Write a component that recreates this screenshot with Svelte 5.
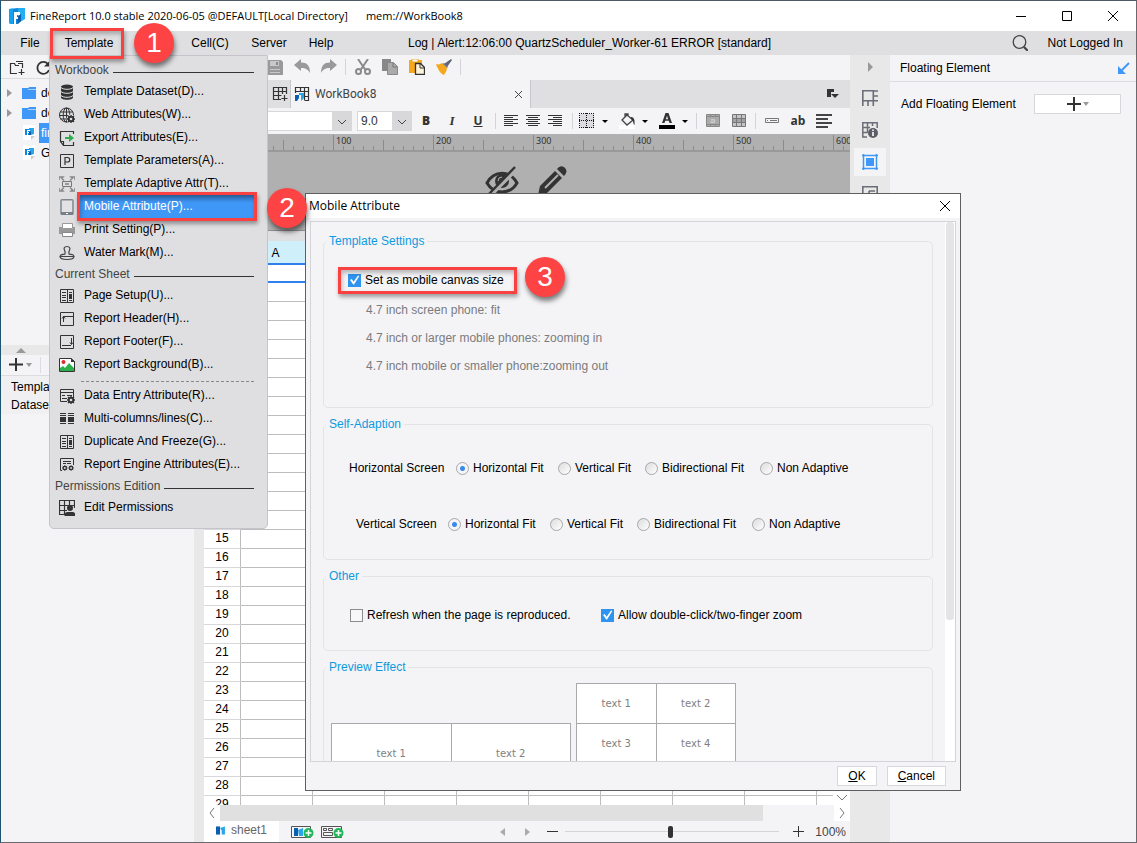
<script lang="ts">
  interface MenuEntry {
    icon: string
    label: string
    active?: boolean
  }

  interface MenuGroup {
    title: string
    items: MenuEntry[]
  }

  const menuGroups: MenuGroup[] = [
    {
      title: 'Workbook',
      items: [
        { icon: 'database', label: 'Template Dataset(D)...' },
        { icon: 'globe', label: 'Web Attributes(W)...' },
        { icon: 'export', label: 'Export Attributes(E)...' },
        { icon: 'param', label: 'Template Parameters(A)...' },
        { icon: 'adaptive', label: 'Template Adaptive Attr(T)...' },
        { icon: 'mobile', label: 'Mobile Attribute(P)...', active: true },
        { icon: 'print', label: 'Print Setting(P)...' },
        { icon: 'stamp', label: 'Water Mark(M)...' },
      ],
    },
    {
      title: 'Current Sheet',
      items: [
        { icon: 'page', label: 'Page Setup(U)...' },
        { icon: 'header', label: 'Report Header(H)...' },
        { icon: 'footer', label: 'Report Footer(F)...' },
        { icon: 'background', label: 'Report Background(B)...' },
      ],
    },
    {
      title: '',
      items: [
        { icon: 'entry', label: 'Data Entry Attribute(R)...' },
        { icon: 'columns', label: 'Multi-columns/lines(C)...' },
        { icon: 'page', label: 'Duplicate And Freeze(G)...' },
        { icon: 'engine', label: 'Report Engine Attributes(E)...' },
      ],
    },
    {
      title: 'Permissions Edition',
      items: [{ icon: 'permission', label: 'Edit Permissions' }],
    },
  ]

  const gear = (x: number, y: number) =>
    `<circle cx="${x}" cy="${y}" r="2.4" fill="none" stroke="#333" stroke-width="1.6"/><path d="M${x} ${y - 4}v8M${x - 4} ${y}h8M${x - 3} ${y - 3}l6 6M${x + 3} ${y - 3}l-6 6" stroke="#333" stroke-width="1.3"/><circle cx="${x}" cy="${y}" r="1.3" fill="#dfdfe1"/>`

  // 16x16 drawings
  const icons: Record<string, string> = {
    logo: '<path d="M0 1l9-1v16H2l-2-1z" fill="#0f86dc"/><path d="M0 1l4-.5V16H2l-2-1z" fill="#14a3ee"/><path d="M9 0h7v11l-5 3-2-8z" fill="#22aef0"/><path d="M8 9l4-3v7l-3 3z" fill="#0b5fb0"/><path d="M5 4h6v3H8v2h1v2H7v5H5z" fill="#fff"/>',
    database: '<path d="M2 2.500v11c0 3 12 3 12 0v-11z" fill="#333"/><ellipse cx="8" cy="2.800" rx="6" ry="2.300" fill="#333"/><path d="M2 3.500c2 2.400 10 2.400 12 0M2 7.500c2 2.400 10 2.400 12 0M2 11.500c2 2.400 10 2.400 12 0" fill="none" stroke="#dfdfe1"/>',
    globe: '<g fill="none" stroke="#333"><circle cx="7.500" cy="8" r="7"/><ellipse cx="7.500" cy="8" rx="3.300" ry="7"/><path d="M1 5h13M.5 8.500h14M1.500 12h8M7.500 1v14"/></g><circle cx="12" cy="12" r="4.500" fill="#dfdfe1"/>' + gear(12, 12),
    export: '<path d="M14.500 4V1.500h-13v10l3 4h10V12M1.500 11.500h3v4" fill="none" stroke="#333" stroke-width="1.200"/><path d="M6 7h4V4l5 4-5 4V9H6z" fill="#2fae4e"/>',
    param: '<path d="M1.500 1.500h13v13h-13z" fill="none" stroke="#333"/><path d="M6 12V4.500h2.500a2.200 2.200 0 0 1 0 4.500H6" fill="none" stroke="#333" stroke-width="1.200"/>',
    adaptive: '<path d="M3.500 5.500h9v5h-9z" fill="none" stroke="#777"/><path d="M6 7h4v2H6z" fill="#999"/><path d="M0 1h4l-1.300 1.300L5 4.500M16 1h-4l1.300 1.300L11 4.500M0 15h4l-1.300-1.300L5 11.500M16 15h-4l1.300-1.300L11 11.500M0 1v3M16 1v3M0 15v-3M16 15v-3" fill="none" stroke="#888" stroke-width="1.500"/>',
    mobile: '<rect x="2" y=".8" width="12" height="14.500" rx="1" fill="#e2e2e4" stroke="#808890" stroke-width="1.500"/><path d="M2 13h12v3H2z" fill="#778088"/><path d="M7 14h2v1H7z" fill="#fff"/>',
    print: '<path d="M3.500 1.500h10v5h-10z" fill="#fff" stroke="#999"/><path d="M0 5h3v2h11V5h2v7H0z" fill="#999"/><path d="M3.500 10.500h10v4h-10z" fill="#fff" stroke="#888"/>',
    stamp: '<path d="M6.200 7C4 3 5.500 1.500 8 1.500S12 3 9.800 7l.4 2.200c3 .2 4.800 1 4.800 2.300H1c0-1.300 1.800-2 4.800-2.300zM1 11.500c0 4 14 4 14 0" fill="none" stroke="#444" stroke-width="1.200"/>',
    page: '<path d="M1.500 1.500h13v13h-13zM8.500 1v14M3 4.500h4M3 7.500h4M3 9.500h4M3 12.500h4M10 4.500h3M10 12.500h3" fill="none" stroke="#333"/><path d="M10 6h3v5h-3z" fill="#333"/>',
    header: '<path d="M1.500 1.500h13v13h-13zM4 5.500h10M4.500 11V6M3 7.500l1.500-2L6 7.500" fill="none" stroke="#333"/>',
    footer: '<path d="M1.500 1.500h13v13h-13zM3 11.500h9M12.500 4v6M11 8.500l1.500 2 1.500-2" fill="none" stroke="#333"/>',
    background: '<path d="M.5 1.500h11.500l3.500 3v10H.5z" fill="#fff" stroke="#333"/><path d="M12 1v4h4z" fill="#333"/><circle cx="4.500" cy="5" r="2" fill="#e02a2a"/><path d="M1 14v-3l3-2 2 2 4-5 5 5v3z" fill="#2fae4e"/>',
    entry: '<path d="M8 13.500H1.500v-12h13V9M1.500 4.500h13M3 7.500h3M8 7.500h5M3 10.500h5" fill="none" stroke="#333"/>' + gear(12, 12),
    columns: '<path d="M1 2.500h6M9 2.500h6M1 4.500h6M9 4.500h6M1 12.500h6M9 12.500h6" stroke="#333"/><path d="M1 6h6v5H1zM9 6h6v5H9z" fill="#333"/>',
    engine: '<path d="M3 13.500H1.500v-12h13V8M4 4.500h8M4 6.500h3M8 6.500h4" fill="none" stroke="#333"/><g transform="translate(3 4) scale(.7)">' + gear(4, 10) + gear(13, 10) + '</g>',
    permission: '<path d="M6 14.500H.5v-14h15V8M.5 5.500h15M.5 10.500H8M5.500.5v14M10.500.5V6" fill="none" stroke="#333" stroke-width="1.200"/><circle cx="11" cy="8" r="3" fill="#333"/><path d="M5.500 16c0-5 3-4 5.500-4s5.500-1 5.500 4z" fill="#333"/>',
    save: '<path d="M0 1h14l2 2v13H0z" fill="#999"/><path d="M3 2h9v5H3zM3 10h10v1H3zM3 13h10v1H3z" fill="#c8c8ca"/><path d="M9 3h2v3H9z" fill="#888"/>',
    undo: '<path d="M0 6l7-6v3.500c6 0 9 3 9 10.500-2-3.500-4-5-9-5V12z" fill="#999"/>',
    redo: '<path d="M16 6L9 0v3.500C3 3.500 0 6.500 0 14c2-3.500 4-5 9-5V12z" fill="#999"/>',
    cut: '<g fill="none" stroke="#8a8a8a" stroke-width="2"><circle cx="3.500" cy="12.500" r="2.500"/><circle cx="12.500" cy="12.500" r="2.500"/><path d="M3 0l7.500 11M13 0L5.500 11"/></g>',
    copy: '<path d="M0 0h9v12H0z" fill="#888"/><path d="M5.500 3.500h6l4 4v8h-10z" fill="#aaa" stroke="#888"/><path d="M11 4v4h4" fill="none" stroke="#777"/>',
    paste: '<path d="M0 1h13v13H0z" fill="#f5a81c"/><path d="M3 0h6v3H3z" fill="#fff" stroke="#e59a10" stroke-width=".8"/><path d="M6.500 4.500h5l4 4v7h-9z" fill="#fff3da" stroke="#333" stroke-width="1.300"/><path d="M11 5v4h4" fill="none" stroke="#333"/>',
    brush: '<path d="M15 0l1 1-5 7-3-3z" fill="#5e6673"/><path d="M8 4l4 4-1 1-5-4z" fill="#778"/><path d="M0 5c3 1 4 0 6-1l5 5c0 3-2 5-3 7-3-1-6-5-8-11z" fill="#f5a81c"/>',
    newtab: '<path d="M14.500 8V1.500h-13v12H9M1.500 5.500h13M1.500 9.500h8M6.500 1.500v12M10.500 1.500V8M12.500 9v6M9.500 12.500h6" fill="none" stroke="#333" stroke-width="1.200"/>',
    book: '<path d="M1.500 7V1.500h13v13H11M1.500 5.500h13M6.500 1.500v4M10.500 1.500v13M10 10.500h4" fill="none" stroke="#333" stroke-width="1.200"/><path d="M1 9h4v3L3 15H1z" fill="#0b5fb0"/><path d="M5 7h5v5l-3 3V9H5z" fill="#29a5e8"/>',
    tabs: '<path d="M3 3h7v3H7v5H3z" fill="#333"/><path d="M7 8h8l-4 4z" fill="#333"/>',
    alignleft: '<path d="M1 2.500h14M1 4.500h9M1 6.500h14M1 8.500h9M1 10.500h14M1 12.500h9" stroke="#333"/>',
    aligncenter: '<path d="M1 2.500h14M3 4.500h10M1 6.500h14M3 8.500h10M1 10.500h14M3 12.500h10" stroke="#333"/>',
    alignright: '<path d="M1 2.500h14M6 4.500h9M1 6.500h14M6 8.500h9M1 10.500h14M6 12.500h9" stroke="#333"/>',
    borders: '<path d="M1 1h14v14H1z" fill="#dcdce0"/><path d="M0 .5h15M0 14.500h15M0 7.500h15M.5 0v15M7.500 0v15M14.500 0v15" fill="none" stroke="#111" stroke-dasharray="1 1"/>',
    fill: '<path d="M0 12h16v4H0z" fill="#fff"/><path d="M8 2l6 5-6 5-5-5zM6 5V1h3v3" fill="none" stroke="#444" stroke-width="1.300"/><path d="M12 4c3 0 4 3 3.500 8C14 11 15 8 12 6z" fill="#333"/>',
    fontcolor: '<path d="M0 12h16v4H0z" fill="#000"/><path d="M6.500 0h3L13 10h-2.500l-.8-2.200H6.300L5.500 10H3zM8 2.800L6.900 6.200h2.200z" fill="#333" fill-rule="evenodd"/>',
    merge: '<path d="M1.500 1.500h13v12h-13z" fill="#aaa" stroke="#888"/><path d="M1 3.500h14M1 11.500h14M5.500 1v2M10.500 1v2M5.500 12v2M10.500 12v2" stroke="#888"/><path d="M6 6.500h3.500v3H6V8h3" fill="none" stroke="#ccc"/>',
    unmerge: '<path d="M1.500 1.500h13v12h-13z" fill="#c4c4c6" stroke="#777"/><path d="M2 5h12v5H2z" fill="#a2a2a4"/><path d="M1 5.500h14M1 9.500h14M5.500 1v13M10.500 1v13" stroke="#777"/>',
    widget: '<path d="M1.500 5.500h13v4h-13z" fill="none" stroke="#777"/><path d="M3 7.500h1M6 7.500h7" stroke="#777"/>',
    lines: '<path d="M0 2h16M0 6h12M0 10h16M0 14h12" stroke="#444" stroke-width="2"/>',
    search: '<circle cx="7.500" cy="7" r="6.300" fill="none" stroke="#444" stroke-width="1.300"/><path d="M12 12l4 4" stroke="#444" stroke-width="2.200"/>',
    cellattr: '<path d="M.8.8h10.500v10H.8zM.8 10.800V16M6 11v5M11.300 11v5M11 1h5M11 6h5M11 10.800h5" fill="none" stroke="#6b6d78" stroke-width="1.600"/>',
    cellinfo: '<path d="M5 15H.8V.8h14.400V6M.8 5.500H8M.8 10.500h5M5.500.8v10M10.500.8V4" fill="none" stroke="#6b6d78" stroke-width="1.500"/><circle cx="11" cy="11" r="5" fill="#5b5d68"/><path d="M11 10v4M11 7.500v1.500" stroke="#fff" stroke-width="1.600"/>',
    floating: '<path d="M1.500 0v16M14.500 0v16M0 1.500h16M0 14.500h16" stroke="#3f97f7" stroke-width="1.500"/><path d="M4 4h8v8H4z" fill="#3f97f7"/>',
    widgetset: '<path d="M.8.8h14.400v14H.8zM7 5h6M7 5v6" fill="none" stroke="#6b6d78" stroke-width="1.600"/>',
    newfolder: '<path d="M8 13.500H1.500v-10h4l1 2H10M9 3.500h4.500V8M12.500 9v6M9.500 12.500h6M7 1.500h7" fill="none" stroke="#333" stroke-width="1.200"/>',
    refresh: '<path d="M13 4a6 6 0 1 0 1 6" fill="none" stroke="#333" stroke-width="1.800"/><path d="M14.500 1v5.500H9z" fill="#333"/>',
    folder: '<path d="M1 3h6l1.500-1H15v12H1z" fill="#3f97f7"/><path d="M7 4.500h8" stroke="#a8d0fb"/>',
    file: '<path d="M2 0h12v11l-4 4H2z" fill="#fff"/><path d="M14 11h-4v4z" fill="#ccc"/><path d="M4 4h4v6H4z" fill="#0f86dc"/><path d="M8 3h5v6l-3 1H8z" fill="#29a5e8"/><path d="M6 5h3v1H7v1h1v1H7v2H6z" fill="#fff"/><path d="M8 7l2-1v4H8z" fill="#0b5fb0"/>',
    sheet: '<path d="M0 3h5v10H0z" fill="#0b5fb0"/><path d="M5 5l6-2v10H7V8z" fill="#29a5e8"/>',
    arrow: '<path d="M13 3L5 11" stroke="#3f97f7" stroke-width="2"/><path d="M2 6v8h8z" fill="#3f97f7"/>',
  }

  const addSheet = [
    '<path d="M.5 2.500h19v11H.5z" fill="none" stroke="#555"/><path d="M3 4h4v8H3z" fill="#0b5fb0"/><path d="M7 6l5-2v8H8z" fill="#29a5e8"/>',
    '<path d="M.5 2.500h20v11H.5zM2.500 4.500h3v2h-3zM7.500 4.500h4v2h-4zM2.500 8.500h9v3h-9z" fill="none" stroke="#555"/>',
  ]

  const strip = ['cellattr', 'cellinfo', 'floating', 'widgetset']
  const tree = [
    { icon: 'folder', label: 'de', open: true },
    { icon: 'folder', label: 'de', open: true },
    { icon: 'file', label: 'fin', selected: true },
    { icon: 'file', label: 'G' },
  ]
  const rows = Array.from({ length: 29 }, (_, i) => i + 1)
  const columns = ['A', 'B', 'C', 'D', 'E', 'F', 'G', 'H', 'I']
  const ticks = Array.from({ length: 62 }, (_, i) => i)

  const fits = [
    { label: 'Horizontal Fit', size: 'w-horizontal' },
    { label: 'Vertical Fit', size: 'w-vertical' },
    { label: 'Bidirectional Fit', size: 'w-both' },
    { label: 'Non Adaptive', size: '' },
  ]

  let horizontal = $state('Horizontal Fit')
  let vertical = $state('Horizontal Fit')
  let mobileCanvas = $state(true)
  let refreshPage = $state(false)
  let allowZoom = $state(true)
  let zoom = $state(49)
</script>

{#snippet icon(name: string, size = 16)}
  <svg width={size} height={size} viewBox="0 0 16 16" aria-hidden="true">{@html icons[name]}</svg>
{/snippet}

{#snippet tool(name: string, label: string)}
  <button class="tool" aria-label={label}>{@render icon(name)}</button>
{/snippet}

<div class="window">
  <header class="titlebar">
    {@render icon('logo')}
    <span class="app-title">FineReport 10.0 stable 2020-06-05 @DEFAULT[Local Directory]</span>
    <span class="file-title">mem://WorkBook8</span>
    <div class="win-buttons">
      <button aria-label="Minimize"><svg width="12" height="12"><path d="M1 6.500h10" stroke="#000" /></svg></button>
      <button aria-label="Maximize"><svg width="12" height="12"><path d="M1.500 1.500h9v9h-9z" fill="none" stroke="#000" /></svg></button>
      <button aria-label="Close"><svg width="12" height="12"><path d="M1 1l10 10M11 1L1 11" stroke="#000" /></svg></button>
    </div>
  </header>

  <nav class="menubar">
    <button class="menu-file">File</button>
    <button class="menu-template">Template</button>
    <button class="menu-cell">Cell(C)</button>
    <button class="menu-server">Server</button>
    <button class="menu-help">Help</button>
    <span class="log">Log | Alert:12:06:00 QuartzScheduler_Worker-61 ERROR [standard]</span>
    <button class="search" aria-label="Search">{@render icon('search')}</button>
    <button class="login">Not Logged In</button>
  </nav>

  <div class="body">
    <aside class="left">
      <div class="left-tools">
        <button aria-label="New folder">{@render icon('newfolder')}</button>
        <button aria-label="Refresh">{@render icon('refresh')}</button>
      </div>
      <ul class="tree">
        {#each tree as node}
          <li>
            <span class="expander">{#if node.open}<svg width="5" height="8"><path d="M0 0l5 4-5 4z" fill="#999" /></svg>{/if}</span>
            {@render icon(node.icon)}
            <span class="node-label" class:selected={node.selected}>{node.label}</span>
          </li>
        {/each}
      </ul>
      <div class="divider"><svg width="10" height="5"><path d="M0 5l5-5 5 5z" fill="#999" /></svg></div>
      <div class="dataset-tools">
        <button aria-label="Add dataset">
          <svg width="24" height="14"><path d="M7 0v13M0 6.500h14" stroke="#333" stroke-width="2" /><path d="M17 5h6l-3 4z" fill="#999" /></svg>
        </button>
      </div>
      <div class="dataset-tabs">
        <span>Template</span>
        <span>Dataset</span>
      </div>
    </aside>
    <div class="splitter"></div>

    <main class="center">
      <div class="toolbar">
        {@render tool('save', 'Save')}
        {@render tool('undo', 'Undo')}
        {@render tool('redo', 'Redo')}
        <i class="sep"></i>
        {@render tool('cut', 'Cut')}
        {@render tool('copy', 'Copy')}
        {@render tool('paste', 'Paste')}
        {@render tool('brush', 'Format painter')}
        <i class="sep"></i>
      </div>

      <div class="tabs">
        <button class="new-tab" aria-label="New tab">{@render icon('newtab')}</button>
        <div class="tab">
          {@render icon('book')}
          <span>WorkBook8</span>
          <button aria-label="Close tab"><svg width="9" height="9"><path d="M1 1l7 7M8 1L1 8" stroke="#444" /></svg></button>
        </div>
        <button class="tab-list" aria-label="Tab list">{@render icon('tabs')}</button>
      </div>

      <div class="format">
        <span class="pick pick-font">
          <select aria-label="Font"><option></option></select>
          <svg width="10" height="6"><path d="M1 1l4 4 4-4" fill="none" stroke="#444" /></svg>
        </span>
        <span class="pick pick-size">
          <select aria-label="Font size"><option>9.0</option></select>
          <svg width="10" height="6"><path d="M1 1l4 4 4-4" fill="none" stroke="#444" /></svg>
        </span>
        <button class="letter"><b>B</b></button>
        <button class="letter"><em>I</em></button>
        <button class="letter"><u>U</u></button>
        <i class="sep"></i>
        {#each ['alignleft', 'aligncenter', 'alignright'] as name}
          <button class="align" aria-label={name}>{@render icon(name)}</button>
        {/each}
        <i class="sep wide"></i>
        {#each ['borders', 'fill', 'fontcolor'] as name}
          <button class="drop" aria-label={name}>
            {@render icon(name)}
            <svg width="6" height="3"><path d="M0 0h6l-3 3z" fill="#000" /></svg>
          </button>
        {/each}
        <i class="sep"></i>
        {@render tool('merge', 'Merge')}
        {@render tool('unmerge', 'Unmerge')}
        <i class="sep"></i>
        {@render tool('widget', 'Widget')}
        <button class="letter ab">ab</button>
        {@render tool('lines', 'Lines')}
      </div>

      <svg class="ruler" aria-hidden="true">
        {#each ticks as i}
          {@const x = 29 + i * 10}
          <line x1={x + 0.5} x2={x + 0.5} y1={i % 10 === 0 ? 1 : i % 5 === 0 ? 6 : 12} y2="16" />
          {#if i % 10 === 0}
            <text x={x + 3} y="10">{i * 10}</text>
          {/if}
        {/each}
      </svg>

      <div class="param-pane">
        <svg width="34" height="30" viewBox="0 0 34 30">
          <path d="M2 17C9 4 25 4 32 17 25 29 9 29 2 17z" fill="none" stroke="#333" stroke-width="3" />
          <circle cx="17" cy="15" r="7" fill="#333" />
          <path d="M13 15a4 4 0 0 1 4-4" fill="none" stroke="#b0b0b0" stroke-width="1" />
          <path d="M31 3L6 28" stroke="#b0b0b0" stroke-width="5" />
          <path d="M30 1L4 28" stroke="#333" stroke-width="2.500" />
        </svg>
        <svg width="30" height="30" viewBox="0 0 30 30">
          <path d="M1 29l2-9L18 5l7 7L10 27z" fill="#333" />
          <path d="M20 3c3-4 6-3 8-1s2 5-1 8z" fill="#333" />
          <path d="M8 22L21 9" stroke="#b0b0b0" stroke-width="2" />
        </svg>
      </div>
      <div class="pane-edge"></div>

      <div class="sheet">
        <div class="grid-wrap">
          <table class="grid">
            <thead>
              <tr>
                <th class="corner"></th>
                {#each columns as col}<th class:selected={col === 'A'}>{col}</th>{/each}
              </tr>
            </thead>
            <tbody>
              {#each rows as row}
                <tr class:current={row === 1}>
                  <th>{row}</th>
                  {#each columns as col}<td class:active={row === 1 && col === 'A'}></td>{/each}
                </tr>
              {/each}
            </tbody>
          </table>
        </div>
        <div class="vscroll">
          <button aria-label="Scroll down"><svg width="10" height="6"><path d="M0 0l5 5 5-5" fill="none" stroke="#777" /></svg></button>
        </div>
      </div>

      <div class="hscroll">
        <button aria-label="Scroll left"><svg width="6" height="10"><path d="M5 0L1 5l4 5" fill="none" stroke="#777" /></svg></button>
        <div class="hthumb"></div>
        <button aria-label="Scroll right"><svg width="6" height="10"><path d="M1 0l4 5-4 5" fill="none" stroke="#777" /></svg></button>
      </div>

      <footer class="statusbar">
        <button class="sheet-tab">{@render icon('sheet', 13)}sheet1</button>
        {#each addSheet as art, i}
          <button class="add-sheet" aria-label="Add sheet {i + 1}">
            <svg width="23" height="16">{@html art}<circle cx="17.500" cy="9" r="5" fill="#1fb757" /><path d="M17.500 6v6M14.500 9h6" stroke="#fff" stroke-width="1.500" /></svg>
          </button>
        {/each}
        <button class="prev" aria-label="Previous sheet"><svg width="5" height="8"><path d="M5 0L0 4l5 4z" fill="#aaa" /></svg></button>
        <button class="next" aria-label="Next sheet"><svg width="5" height="8"><path d="M0 0l5 4-5 4z" fill="#aaa" /></svg></button>
        <button class="minus" aria-label="Zoom out"><svg width="11" height="11"><path d="M0 5.500h11" stroke="#333" /></svg></button>
        <input type="range" min="0" max="100" aria-label="Zoom" bind:value={zoom} />
        <button class="plus" aria-label="Zoom in"><svg width="11" height="11"><path d="M0 5.500h11M5.500 0v11" stroke="#333" /></svg></button>
        <span class="percent">100%</span>
      </footer>
    </main>

    <div class="strip">
      <button class="collapse" aria-label="Collapse"><svg width="5" height="10"><path d="M0 0l5 5-5 5z" fill="#999" /></svg></button>
      {#each strip as name}
        <button class="strip-btn" class:on={name === 'floating'} aria-label={name}>{@render icon(name)}</button>
      {/each}
    </div>

    <aside class="right">
      <div class="right-head">
        <span>Floating Element</span>
        <button aria-label="Undock">{@render icon('arrow')}</button>
      </div>
      <div class="right-row">
        <span id="add-floating">Add Floating Element</span>
        <button aria-labelledby="add-floating">
          <svg width="22" height="14"><path d="M7 0v14M0 7h14" stroke="#333" stroke-width="2" /><path d="M16 5h6l-3 4z" fill="#999" /></svg>
        </button>
      </div>
    </aside>
  </div>

  <div class="dropdown" role="menu">
    {#each menuGroups as group}
      {#if group.title}
        <div class="group-title"><span>{group.title}</span></div>
      {:else}
        <div class="group-line"></div>
      {/if}
      {#each group.items as item}
        <button class="item" class:active={item.active} role="menuitem">
          {@render icon(item.icon)}
          <span>{item.label}</span>
        </button>
      {/each}
    {/each}
  </div>

  <div class="dialog" role="dialog" aria-labelledby="dialog-title">
    <div class="dialog-title">
      <span id="dialog-title">Mobile Attribute</span>
      <button aria-label="Close dialog"><svg width="12" height="12"><path d="M1 1l10 10M11 1L1 11" stroke="#000" /></svg></button>
    </div>

    <div class="pane">
      <div class="pane-content">
        <fieldset class="settings">
          <legend>Template Settings</legend>
          <label class="check"><input type="checkbox" bind:checked={mobileCanvas} />Set as mobile canvas size</label>
          <div class="hints">
            <p>4.7 inch screen phone: fit</p>
            <p>4.7 inch or larger mobile phones: zooming in</p>
            <p>4.7 inch mobile or smaller phone:zooming out</p>
          </div>
        </fieldset>

        <fieldset class="adaption">
          <legend>Self-Adaption</legend>
          <div class="radio-row horizontal" role="radiogroup" aria-label="Horizontal Screen">
            <span class="row-label">Horizontal Screen</span>
            {#each fits as fit}
              <label class={fit.size}><input type="radio" name="horizontal" value={fit.label} bind:group={horizontal} />{fit.label}</label>
            {/each}
          </div>
          <div class="radio-row vertical" role="radiogroup" aria-label="Vertical Screen">
            <span class="row-label">Vertical Screen</span>
            {#each fits as fit}
              <label class={fit.size}><input type="radio" name="vertical" value={fit.label} bind:group={vertical} />{fit.label}</label>
            {/each}
          </div>
        </fieldset>

        <fieldset>
          <legend>Other</legend>
          <div class="other">
            <label class="check"><input type="checkbox" bind:checked={refreshPage} />Refresh when the page is reproduced.</label>
            <label class="check"><input type="checkbox" bind:checked={allowZoom} />Allow double-click/two-finger zoom</label>
          </div>
        </fieldset>

        <fieldset>
          <legend>Preview Effect</legend>
          <div class="preview">
            <div class="cells before"><span>text 1</span><span>text 2</span></div>
            <div class="cells after"><span>text 1</span><span>text 2</span><span>text 3</span><span>text 4</span></div>
          </div>
        </fieldset>
      </div>
      <div class="pane-scroll"><div></div></div>
    </div>

    <div class="dialog-footer">
      <button><u>O</u>K</button>
      <button><u>C</u>ancel</button>
    </div>
  </div>

  <div class="frame frame-1"></div>
  <div class="frame frame-2"></div>
  <div class="frame frame-3"></div>
  <div class="step step-1">1</div>
  <div class="step step-2">2</div>
  <div class="step step-3">3</div>
</div>

<style>
  :global(body) {
    margin: 0;
  }

  .window {
    position: relative;
    display: flex;
    flex-direction: column;
    box-sizing: border-box;
    height: 100vh;
    overflow: hidden;
    border: 1px solid #6a6a6e;
    border-top-color: #4d5a66;
    border-left-color: #1d5472;
    background: #f4f4f6;
    color: #000;
    font: 12px/16px "Liberation Sans", Arial, sans-serif;
  }
  .window * {
    box-sizing: border-box;
  }

  button {
    display: flex;
    align-items: center;
    justify-content: center;
    padding: 0;
    border: 0;
    background: none;
    color: inherit;
    font: inherit;
    white-space: nowrap;
  }

  svg {
    display: block;
    flex-shrink: 0;
  }

  .titlebar {
    display: flex;
    align-items: center;
    height: 30px;
    padding-left: 8px;
    background: #fff;
    font-family: "Open Sans", "Noto Sans", sans-serif;
    font-size: 11px;
    flex-shrink: 0;
  }
  .app-title {
    margin-left: 5px;
  }
  .file-title {
    margin-left: 18px;
  }
  .win-buttons {
    display: flex;
    margin-left: auto;
  }
  .win-buttons button {
    width: 46px;
    height: 30px;
  }

  .menubar {
    display: flex;
    align-items: center;
    height: 24px;
    padding-right: 13px;
    background: #dfdfe1;
    flex-shrink: 0;
  }
  .menu-file {
    width: 58px;
  }
  .menu-template {
    width: 60px;
  }
  .menu-cell {
    width: 64px;
    margin-left: 59px;
  }
  .menu-server {
    width: 54px;
  }
  .menu-help {
    width: 50px;
  }
  .log {
    margin-left: 62px;
  }
  .search {
    margin-left: auto;
  }
  .login {
    margin-left: 20px;
  }

  .body {
    display: flex;
    flex: 1;
    min-height: 0;
  }

  .left {
    display: flex;
    flex-direction: column;
    width: 193px;
    flex-shrink: 0;
  }
  .left-tools {
    display: flex;
    align-items: center;
    gap: 10px;
    height: 24px;
    padding: 2px 8px 0;
    border-bottom: 1px solid #dcdce0;
  }
  .tree {
    height: 266px;
    margin: 0;
    padding: 4px 0 0;
    list-style: none;
  }
  .tree li {
    display: flex;
    align-items: center;
    height: 20px;
  }
  .expander {
    width: 14px;
    margin-left: 6px;
  }
  .node-label {
    margin-left: 2px;
    padding: 2px;
  }
  .node-label.selected {
    background: #3f97f7;
    color: #fff;
  }
  .divider {
    display: flex;
    align-items: center;
    height: 10px;
    padding-left: 15px;
    background: #e8e8e8;
  }
  .dataset-tools {
    display: flex;
    align-items: center;
    height: 21px;
    padding-left: 8px;
    border-bottom: 1px solid #dcdce0;
  }
  .dataset-tools button {
    height: 16px;
    padding-right: 7px;
    border-right: 1px solid #dcdce0;
  }
  .dataset-tabs {
    display: flex;
    flex-direction: column;
    padding: 2px 0 0 10px;
    background: #f0f0f2;
    line-height: 18px;
  }

  .splitter {
    width: 10px;
    background: #e8e8e8;
    flex-shrink: 0;
  }

  .center {
    display: flex;
    flex-direction: column;
    flex: 1;
    min-width: 0;
  }

  .toolbar {
    display: flex;
    align-items: center;
    height: 25px;
    padding: 0 0 2px 57px;
  }
  .tool {
    width: 27px;
    height: 22px;
  }
  .sep {
    width: 1px;
    height: 16px;
    margin: 0 3px;
    background: #d4d4d8;
  }
  .letter + .sep {
    margin: 0 4px;
  }
  .sep.wide {
    margin-left: 6px;
  }

  .tabs {
    display: flex;
    height: 28px;
    background: #dfdfe1;
  }
  .new-tab {
    width: 87px;
    padding-left: 65px;
    border-right: 1px solid #c8c8cc;
  }
  .tab {
    display: flex;
    align-items: center;
    width: 240px;
    padding: 0 7px 0 3px;
    border-right: 1px solid #c8c8cc;
    background: #f4f4f6;
    color: #444;
    font-family: Roboto, sans-serif;
  }
  .tab span {
    margin: 0 auto 0 5px;
  }
  .tab-list {
    width: 20px;
    margin-left: auto;
    margin-right: 8px;
  }

  .format {
    display: flex;
    align-items: center;
    height: 26px;
  }
  .format .tool {
    width: 26px;
  }
  .pick {
    position: relative;
    height: 20px;
    margin-right: 5px;
  }
  .pick-font {
    width: 148px;
  }
  .pick-size {
    width: 55px;
    margin-right: 1px;
  }
  .pick select {
    width: 100%;
    height: 100%;
    padding: 0 0 0 3px;
    border: 1px solid #d8d8db;
    border-right: 20px solid #d8d8db;
    border-radius: 0;
    appearance: none;
    background: #fff;
    color: #333;
    font: inherit;
  }
  .pick svg {
    position: absolute;
    top: 8px;
    right: 5px;
    pointer-events: none;
  }
  .letter {
    width: 26px;
    color: #333;
    font-family: "Open Sans", sans-serif;
    font-weight: 700;
  }
  .letter em {
    font-family: "Liberation Serif", serif;
    font-size: 13px;
  }
  .align {
    width: 22px;
  }
  .drop {
    gap: 7px;
    width: 34px;
    margin-right: 6px;
  }
  .drop + .sep {
    margin-left: 0;
  }

  .ruler {
    width: 100%;
    height: 18px;
    border-bottom: 2px solid #999;
    background: #b0b0b0;
  }
  .ruler line {
    stroke: #8a8a8a;
  }
  .ruler text {
    fill: #333;
    font: 9px "Noto Sans", sans-serif;
  }

  .param-pane {
    display: flex;
    gap: 18px;
    height: 79px;
    padding: 14px 0 0 281px;
    border-bottom: 1px solid #8f8f8f;
    background: #b0b0b0;
    flex-shrink: 0;
  }
  .pane-edge {
    height: 10px;
    background: #dfdfe1;
    flex-shrink: 0;
  }

  .sheet {
    display: flex;
    flex: 1;
    min-height: 0;
  }
  .grid-wrap {
    flex: 1;
    min-width: 0;
    overflow: hidden;
    background: #fff;
  }
  .grid {
    table-layout: fixed;
    width: 685px;
    border-spacing: 0;
  }
  .grid th,
  .grid td {
    width: 72px;
    height: 19px;
    padding: 0;
    border-right: 1px solid #bdbdbd;
    border-bottom: 1px solid #bdbdbd;
    font-weight: 400;
    line-height: 16px;
    vertical-align: top;
  }
  .grid .corner,
  .grid tbody th {
    width: 37px;
    border-bottom-color: #d8d8da;
  }
  .grid thead th {
    height: 24px;
    padding: 4px 2px 0 0;
    background: #f4f4f6;
  }
  .grid thead th.selected {
    border-bottom: 2px solid #2f80ed;
    background: #cfeffb;
  }
  .grid .current th,
  .grid .current td {
    height: 18px;
  }
  .grid .current td.active {
    border-bottom: 2px solid #2f80ed;
  }
  .vscroll {
    display: flex;
    flex-direction: column;
    justify-content: flex-end;
    width: 17px;
  }
  .vscroll button {
    height: 15px;
    background: #fff;
  }

  .hscroll {
    display: flex;
    height: 16px;
    flex-shrink: 0;
  }
  .hscroll button {
    width: 16px;
    background: #fff;
  }
  .hthumb {
    width: 84%;
    margin-right: auto;
    background: #e0e0e0;
  }

  .statusbar {
    display: flex;
    align-items: center;
    height: 21px;
    padding-right: 4px;
    color: #444;
    flex-shrink: 0;
  }
  .sheet-tab {
    gap: 2px;
    width: 75px;
    height: 21px;
    margin-right: 12px;
    padding-bottom: 3px;
    background: #fff;
    color: #666;
  }
  .add-sheet {
    margin-right: 7px;
  }
  .prev {
    margin-left: auto;
  }
  .next {
    margin: 0 17px 0 20px;
  }
  .statusbar input {
    width: 214px;
    height: 16px;
    margin: 0 14px 0 7px;
    appearance: none;
    background: linear-gradient(#d4d4d6, #d4d4d6) center / 100% 1px no-repeat;
  }
  .statusbar input::-webkit-slider-thumb {
    width: 5px;
    height: 12px;
    border-radius: 2px;
    appearance: none;
    background: #333;
  }
  .percent {
    margin-left: 11px;
  }

  .strip {
    display: flex;
    flex-direction: column;
    align-items: center;
    width: 40px;
    background: #e8e8e8;
    flex-shrink: 0;
  }
  .collapse {
    width: 16px;
    height: 24px;
    margin-bottom: 5px;
  }
  .strip-btn {
    width: 32px;
    height: 28px;
    margin-bottom: 4px;
  }
  .strip-btn.on {
    background: #f4f4f6;
  }

  .right {
    width: 246px;
    flex-shrink: 0;
  }
  .right-head {
    display: flex;
    align-items: center;
    justify-content: space-between;
    height: 27px;
    padding: 0 4px 0 10px;
    border-bottom: 1px solid #dcdce0;
  }
  .right-row {
    display: flex;
    align-items: center;
    justify-content: space-between;
    padding: 12px 15px 0 11px;
  }
  .right-row button {
    width: 87px;
    height: 20px;
    border: 1px solid #d8d8dc;
    background: #fff;
  }

  .dropdown {
    position: absolute;
    top: 54px;
    left: 48px;
    width: 219px;
    padding: 4px 0 9px;
    border: 1px solid #c4c4ca;
    border-radius: 0 0 5px 5px;
    background: #dfdfe1;
  }
  .group-title {
    display: flex;
    align-items: center;
    gap: 4px;
    height: 20px;
    padding: 0 13px 0 5px;
    color: #444;
  }
  .group-title::after {
    content: "";
    flex: 1;
    height: 1px;
    margin-top: 4px;
    background: #333;
  }
  .group-line {
    height: 8px;
    margin: 0 13px 0 31px;
    padding-top: 5px;
  }
  .group-line::after {
    content: "";
    display: block;
    border-top: 1px dashed #888;
  }
  .item {
    justify-content: flex-start;
    gap: 4px;
    width: 100%;
    height: 23px;
    padding: 0 13px 0 9px;
  }
  .item span {
    flex: 1;
    padding: 3px 5px 4px;
    text-align: left;
  }
  .item.active span {
    background: linear-gradient(#3479c4, #3f97f7 8px);
    color: #fff;
  }

  .dialog {
    position: absolute;
    top: 192px;
    left: 304px;
    width: 656px;
    border: 1px solid #5f5f62;
    background: #f4f4f6;
  }
  .dialog-title {
    display: flex;
    align-items: center;
    justify-content: space-between;
    height: 24px;
    padding: 0 9px 0 3px;
    background: #fff;
    font-family: "Open Sans", "Noto Sans", sans-serif;
  }
  .pane {
    display: flex;
    height: 541px;
    margin: 3px 4px 0;
    border: 1px solid #d4d4d8;
    overflow: hidden;
  }
  .pane-content {
    display: flex;
    flex-direction: column;
    flex: 1;
    gap: 8px;
    padding: 11px 12px 0;
  }
  .pane-scroll {
    width: 10px;
    background: #fff;
  }
  .pane-scroll div {
    width: 8px;
    height: 398px;
    margin-left: 1px;
    border-radius: 3px;
    background: #e4e4e4;
  }

  fieldset {
    min-width: 0;
    margin: 0;
    padding: 0;
    border: 1px solid #e4e4e7;
    border-radius: 5px;
    flex-shrink: 0;
  }
  legend {
    margin-left: 2px;
    padding: 0 3px;
    color: #0f9ade;
  }

  .check,
  .radio-row label {
    display: flex;
    align-items: center;
    gap: 4px;
    height: 20px;
    white-space: nowrap;
  }
  input[type="checkbox"],
  input[type="radio"] {
    width: 13px;
    height: 13px;
    margin: 0;
    appearance: none;
    border: 1px solid #8c8c8e;
    background: #f7f7f8;
    flex-shrink: 0;
  }
  input[type="checkbox"]:checked {
    border-color: #2f93f0;
    background: #2f93f0;
  }
  input[type="checkbox"]:checked::after {
    content: "";
    display: block;
    height: 11px;
    background: #fff;
    clip-path: polygon(10% 50%, 24% 42%, 42% 66%, 82% 8%, 94% 14%, 46% 92%, 38% 92%);
  }
  input[type="radio"] {
    border-color: #a8a8aa;
    border-radius: 50%;
    background: linear-gradient(135deg, #dcdcdc, #fff);
  }
  input[type="radio"]:checked {
    background: radial-gradient(#3b8ae8 0 2px, #f4f4f6 3px);
  }

  .settings {
    padding: 21px 0 27px;
  }
  .settings .check {
    margin-left: 24px;
  }
  .hints {
    padding: 6px 0 0 42px;
    color: #7b7b7d;
    line-height: 28px;
  }
  .hints p {
    margin: 0;
  }

  .adaption {
    display: flex;
    flex-direction: column;
    gap: 36px;
    padding: 26px 0 25px;
  }
  .radio-row {
    display: flex;
    align-items: center;
    padding-left: 25px;
  }
  .radio-row.vertical {
    padding-left: 32px;
  }
  .horizontal .row-label {
    width: 107px;
  }
  .vertical .row-label {
    width: 92px;
  }
  .w-horizontal {
    width: 102px;
  }
  .w-vertical {
    width: 87px;
  }
  .w-both {
    width: 115px;
  }

  .other {
    display: flex;
    padding: 21px 0 25px 26px;
  }
  .other .check {
    width: 251px;
  }

  .preview {
    display: flex;
    align-items: flex-start;
    gap: 5px;
    padding: 8px 0 8px 7px;
  }
  .cells {
    display: grid;
    grid-template-columns: 1fr 1fr;
    border: solid #a9a9ac;
    border-width: 1px 0 0 1px;
    background: #fff;
    color: #808080;
    font: 10px/12px "DejaVu Sans", Verdana, sans-serif;
  }
  .cells span {
    display: flex;
    align-items: center;
    justify-content: center;
    height: 40px;
    border: solid #a9a9ac;
    border-width: 0 1px 1px 0;
  }
  .before {
    width: 240px;
    margin-top: 40px;
  }
  .before span {
    height: 60px;
  }
  .after {
    width: 160px;
  }

  .dialog-footer {
    display: flex;
    justify-content: flex-end;
    gap: 10px;
    padding: 4px 14px;
  }
  .dialog-footer button {
    height: 20px;
    padding: 0 10px;
    border: 1px solid #d8d8dc;
    background: #fff;
  }

  .frame {
    position: absolute;
    border: 3px solid #fa4141;
    box-shadow: 1px 3px 4px rgba(0, 0, 0, 0.35), inset 1px 3px 4px rgba(0, 0, 0, 0.25);
    pointer-events: none;
  }
  .frame-1 {
    top: 27px;
    left: 49px;
    width: 74px;
    height: 31px;
  }
  .frame-2 {
    top: 191px;
    left: 76px;
    width: 180px;
    height: 29px;
  }
  .frame-3 {
    top: 266px;
    left: 337px;
    width: 179px;
    height: 27px;
  }

  .step {
    position: absolute;
    width: 40px;
    height: 40px;
    border-radius: 50%;
    background: #fd4343;
    box-shadow: 1px 4px 5px rgba(0, 0, 0, 0.5);
    color: #fff;
    font: 28px/40px "Liberation Sans", Arial, sans-serif;
    text-align: center;
    pointer-events: none;
  }
  .step-1 {
    top: 22px;
    left: 133px;
  }
  .step-2 {
    top: 187px;
    left: 266px;
  }
  .step-3 {
    top: 256px;
    left: 524px;
  }
</style>
